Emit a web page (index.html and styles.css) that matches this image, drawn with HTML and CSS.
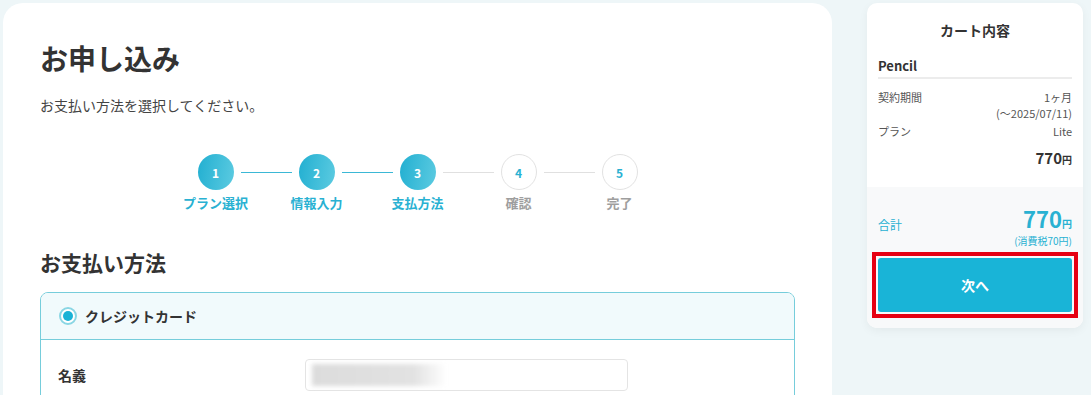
FILE: index.html
```html
<!DOCTYPE html>
<html lang="ja">
<head>
    <meta charset="UTF-8">
    <meta name="viewport" content="width=device-width, initial-scale=1.0">
    <title>お申し込み</title>
    <link rel="stylesheet" href="styles.css">
</head>
<body>

    <div class="page">
        <!-- Main form -->
        <main class="main-card">
            <h1>お申し込み</h1>
            <p class="lead">お支払い方法を選択してください。</p>

            <!-- Stepper -->
            <div class="stepper">
                <div class="step-track">
                    <span class="step-circle done">1</span>
                    <span class="step-line done"></span>
                    <span class="step-circle done">2</span>
                    <span class="step-line done"></span>
                    <span class="step-circle done">3</span>
                    <span class="step-line"></span>
                    <span class="step-circle">4</span>
                    <span class="step-line"></span>
                    <span class="step-circle">5</span>
                </div>
                <div class="step-labels">
                    <span class="step-label done">プラン選択</span>
                    <span class="step-label done">情報入力</span>
                    <span class="step-label done">支払方法</span>
                    <span class="step-label">確認</span>
                    <span class="step-label">完了</span>
                </div>
            </div>

            <h2>お支払い方法</h2>

            <div class="pay-box">
                <div class="pay-head">
                    <span class="radio"></span>
                    <span class="pay-title">クレジットカード</span>
                </div>
                <div class="pay-row">
                    <span class="pay-label">名義</span>
                    <div class="input">
                        <span class="blurred"></span>
                    </div>
                </div>
            </div>
        </main>

        <!-- Cart summary -->
        <aside class="cart">
            <div class="cart-body">
                <h3 class="cart-title">カート内容</h3>
                <div class="cart-product">Pencil</div>
                <div class="cart-row">
                    <span>契約期間</span>
                    <span class="right">1ヶ月<br>(〜2025/07/11)</span>
                </div>
                <div class="cart-row">
                    <span>プラン</span>
                    <span class="right">Lite</span>
                </div>
                <div class="cart-price">770<small>円</small></div>
            </div>
            <div class="cart-total">
                <div class="total-row">
                    <span class="total-label">合計</span>
                    <span class="total-price">770<small>円</small></span>
                </div>
                <div class="tax">(消費税70円)</div>
                <div class="next-frame">
                    <button class="next-button" type="button">次へ</button>
                </div>
            </div>
        </aside>
    </div>

</body>
</html>
```

FILE: styles.css
```css
body {
    font-family: "Noto Sans CJK JP", "Noto Sans", sans-serif;
    margin: 0;
    padding: 0;
    background-color: #eef6f8;
    color: #333;
    height: 395px;
    overflow: hidden;
}
.page {
    display: flex;
    align-items: flex-start;
    gap: 35px;
    padding: 3px 0 0 3px;
}

/* Main card */
.main-card {
    width: 829px;
    min-height: 440px;
    box-sizing: border-box;
    background-color: #fff;
    border-radius: 20px;
    padding: 35px 37px 0 37px;
}
h1 {
    margin: 0;
    font-size: 28px;
    line-height: 40px;
    font-weight: 700;
    color: #333;
}
.lead {
    margin: 17px 0 0;
    font-size: 14px;
    line-height: 20px;
    color: #444;
}

/* Stepper */
.stepper {
    margin-top: 39px;
    display: flex;
    flex-direction: column;
    align-items: center;
}
.step-track {
    display: flex;
    align-items: center;
}
.step-circle {
    width: 36px;
    height: 36px;
    box-sizing: border-box;
    border-radius: 50%;
    border: 1px solid #e2e2e2;
    background-color: #fff;
    color: #29b1d2;
    font-size: 12px;
    font-weight: 700;
    display: flex;
    align-items: center;
    justify-content: center;
}
.step-circle.done {
    border: none;
    color: #fff;
    background: linear-gradient(100deg, #22afd1, #5ccbe1);
}
.step-line {
    width: 51px;
    height: 1px;
    margin: 0 7px;
    background-color: #e0e0e0;
}
.step-line.done {
    background-color: #3bb8d6;
}
.step-labels {
    display: flex;
    margin-top: 4px;
}
.step-label {
    width: 101px;
    text-align: center;
    font-size: 13px;
    line-height: 18px;
    font-weight: 700;
    color: #9e9e9e;
}
.step-label.done {
    color: #29b1d2;
}

h2 {
    margin: 35px 0 0;
    font-size: 21px;
    line-height: 30px;
    font-weight: 700;
    color: #333;
}

/* Payment box */
.pay-box {
    margin-top: 15px;
    border: 1px solid #76cddb;
    border-radius: 8px;
    overflow: hidden;
}
.pay-head {
    height: 46px;
    display: flex;
    align-items: center;
    gap: 8px;
    padding-left: 18px;
    background-color: #f1fafc;
    border-bottom: 1px solid #76cddb;
}
.radio {
    width: 18px;
    height: 18px;
    box-sizing: border-box;
    border-radius: 50%;
    border: 2px solid #8ad6e4;
    background-color: #fff;
    display: flex;
    align-items: center;
    justify-content: center;
}
.radio::after {
    content: "";
    width: 10px;
    height: 10px;
    border-radius: 50%;
    background-color: #1ab2d6;
}
.pay-title {
    font-size: 14px;
    font-weight: 700;
    color: #333;
}
.pay-row {
    display: flex;
    align-items: center;
    padding: 19px 0 20px 17px;
}
.pay-label {
    width: 247px;
    font-size: 14px;
    font-weight: 700;
    color: #333;
}
.input {
    width: 323px;
    height: 32px;
    box-sizing: border-box;
    border: 1px solid #e4e4e4;
    border-radius: 4px;
    display: flex;
    align-items: center;
    padding-left: 6px;
}
.blurred {
    width: 135px;
    height: 22px;
    background: linear-gradient(90deg, #dcdcdc, #e2e2e2 75%, #fff);
    filter: blur(2px);
}

/* Cart */
.cart {
    width: 216px;
    background-color: #fff;
    border-radius: 10px;
    box-shadow: 0 3px 10px rgba(0, 0, 0, 0.05);
    overflow: hidden;
}
.cart-body {
    padding: 17px 11px 16px;
}
.cart-title {
    margin: 0;
    text-align: center;
    font-size: 14px;
    line-height: 20px;
    font-weight: 700;
    color: #333;
}
.cart-product {
    margin-top: 16px;
    font-size: 13px;
    line-height: 20px;
    font-weight: 700;
    color: #333;
    padding-bottom: 1px;
    border-bottom: 2px solid #ececec;
    margin-bottom: 10px;
}
.cart-row {
    display: flex;
    justify-content: space-between;
    font-size: 11px;
    line-height: 16px;
    color: #555;
    margin-bottom: 2px;
}
.cart-row .right {
    text-align: right;
}
.cart-price {
    margin-top: 8px;
    text-align: right;
    font-size: 15px;
    line-height: 22px;
    font-weight: 700;
    color: #333;
}
.cart-price small,
.total-price small {
    font-size: 10px;
    font-weight: 700;
}
.cart-total {
    background-color: #f8f9fa;
    padding: 21px 5px 10px;
}
.total-row {
    display: flex;
    justify-content: space-between;
    align-items: center;
    height: 26px;
    padding: 0 6px;
    color: #29b1d2;
}
.total-label {
    font-size: 12px;
    line-height: 16px;
    padding-top: 8px;
}
.total-price {
    font-size: 22px;
    line-height: 26px;
    font-weight: 700;
}
.tax {
    padding: 0 6px;
    text-align: right;
    font-size: 10px;
    line-height: 14px;
    color: #29b1d2;
}
.next-frame {
    margin-top: 4px;
    border: 4px solid #e60012;
    padding: 2px;
}
.next-button {
    display: block;
    width: 100%;
    height: 54px;
    border: none;
    border-radius: 3px;
    background-color: #19b4d7;
    color: #fff;
    font-family: inherit;
    font-size: 14px;
    font-weight: 700;
    cursor: pointer;
}
```
